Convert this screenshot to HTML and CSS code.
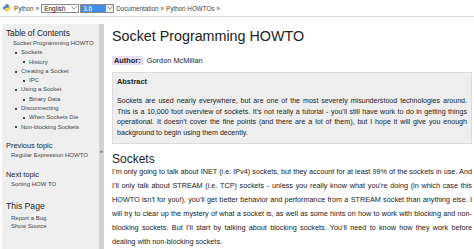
FILE: index.html
```html
<!DOCTYPE html>
<html lang="en">
<head>
    <meta charset="UTF-8">
    <meta name="viewport" content="width=device-width, initial-scale=1.0">
    <title>Socket Programming HOWTO</title>
    <link rel="stylesheet" href="styles.css">
</head>
<body>
    <div class="related">
        <svg class="logo" width="8" height="8" viewBox="0 0 16 16">
            <path d="M7.8 0.5c-3.6 0-3.4 1.6-3.4 1.6v1.6h3.5v0.6H3C1.3 4.3 0.5 5.6 0.5 7.9s1.2 3.6 2.6 3.6h1.4V9.6s-0.1-1.9 1.9-1.9h3.4s1.8 0 1.8-1.8V2.4S11.8 0.5 7.8 0.5z" fill="#3a74a8"/>
            <path d="M8.2 15.5c3.6 0 3.4-1.6 3.4-1.6v-1.6H8.1v-0.6H13c1.7 0 2.5-1.3 2.5-3.6s-1.2-3.6-2.6-3.6h-1.4v1.9s0.1 1.9-1.9 1.9H6.2s-1.8 0-1.8 1.8v3.5s-0.2 1.9 3.8 1.9z" fill="#f5cd3b"/>
        </svg>
        <span>Python</span>
        <span class="sep">&raquo;</span>
        <span class="select lang">
            <span class="value">English</span>
            <span class="arrow"><svg width="6" height="4" viewBox="0 0 6 4"><path d="M0.5 0.5 3 3.2 5.5 0.5" fill="none" stroke="#777" stroke-width="0.8"/></svg></span>
        </span>
        <span class="select version">
            <span class="value">3.6</span>
            <span class="arrow"><svg width="6" height="4" viewBox="0 0 6 4"><path d="M0.5 0.5 3 3.2 5.5 0.5" fill="none" stroke="#777" stroke-width="0.8"/></svg></span>
        </span>
        <span>Documentation</span>
        <span class="sep">&raquo;</span>
        <span>Python HOWTOs</span>
        <span class="sep">&raquo;</span>
    </div>

    <div class="document">
        <div class="sidebar">
            <div class="sidebar-inner">
                <h3>Table of Contents</h3>
                <ul class="toc">
                    <li>Socket Programming HOWTO
                        <ul>
                            <li>Sockets
                                <ul><li>History</li></ul>
                            </li>
                            <li>Creating a Socket
                                <ul><li>IPC</li></ul>
                            </li>
                            <li>Using a Socket
                                <ul><li>Binary Data</li></ul>
                            </li>
                            <li>Disconnecting
                                <ul><li>When Sockets Die</li></ul>
                            </li>
                            <li>Non-blocking Sockets</li>
                        </ul>
                    </li>
                </ul>

                <h4 class="prev">Previous topic</h4>
                <p class="topless">Regular Expression HOWTO</p>

                <h4>Next topic</h4>
                <p class="topless">Sorting HOW TO</p>

                <h3 class="this-page">This Page</h3>
                <ul class="this-page-menu">
                    <li>Report a Bug</li>
                    <li>Show Source</li>
                </ul>
            </div>
            <div class="collapse">&laquo;</div>
        </div>

        <div class="body">
            <h1>Socket Programming HOWTO</h1>

            <div class="field">
                <span class="field-name">Author:</span>
                <span>Gordon McMillan</span>
            </div>

            <div class="topic">
                <p class="topic-title">Abstract</p>
                <p>Sockets are used nearly everywhere, but are one of the most severely misunderstood technologies around. This is a 10,000 foot overview of sockets. It&rsquo;s not really a tutorial - you&rsquo;ll still have work to do in getting things operational. It doesn&rsquo;t cover the fine points (and there are a lot of them), but I hope it will give you enough background to begin using them decently.</p>
            </div>

            <h2>Sockets</h2>
            <p>I&rsquo;m only going to talk about INET (i.e. IPv4) sockets, but they account for at least 99% of the sockets in use. And I&rsquo;ll only talk about STREAM (i.e. TCP) sockets - unless you really know what you&rsquo;re doing (in which case this HOWTO isn&rsquo;t for you!), you&rsquo;ll get better behavior and performance from a STREAM socket than anything else. I will try to clear up the mystery of what a socket is, as well as some hints on how to work with blocking and non-blocking sockets. But I&rsquo;ll start by talking about blocking sockets. You&rsquo;ll need to know how they work before dealing with non-blocking sockets.</p>
            <p>Part of the trouble with understanding these things is that &ldquo;socket&rdquo; can mean a number of subtly different things, depending on context.</p>
        </div>
    </div>
</body>
</html>
```

FILE: styles.css
```css
* {
    margin: 0;
    padding: 0;
    box-sizing: border-box;
}

body {
    font-family: 'Liberation Sans', Arial, sans-serif;
    color: #222;
    background: #fff;
    overflow: hidden;
    height: 249px;
}

/* Top navigation */
.related {
    height: 17px;
    border-bottom: 1px solid #d8d8d8;
    display: flex;
    align-items: center;
    gap: 2px;
    padding-left: 3px;
    font-size: 6.3px;
    color: #444;
}

.logo {
    margin-right: 1px;
}

.select {
    display: flex;
    align-items: stretch;
    height: 9px;
    border: 1px solid #8a8a8a;
    font-size: 6.5px;
    color: #111;
    background: #fff;
}

.select .value {
    display: flex;
    align-items: center;
    padding: 0 2px;
}

.select .arrow {
    display: flex;
    align-items: center;
    justify-content: center;
    width: 8px;
}

.lang {
    width: 38px;
    justify-content: space-between;
}

.version {
    width: 34px;
    margin-left: -1px;
}

.version .value {
    flex: 1;
    background: #3d8ee6;
    color: #fff;
}

.version .arrow {
    border-left: 1px solid #8a8a8a;
    background: #f3f3f3;
}

/* Page */
.document {
    display: flex;
    align-items: flex-start;
    height: 232px;
}

.sidebar {
    display: flex;
    margin: 7px 0 0 2px;
    height: 230px;
}

.sidebar-inner {
    width: 97px;
    background: #efefef;
    padding: 5px 0 0 4px;
    color: #444;
}

.sidebar h3 {
    font-size: 8.2px;
    font-weight: normal;
    line-height: 10px;
    color: #222;
}

.sidebar h4 {
    font-size: 7.4px;
    font-weight: normal;
    line-height: 10px;
    color: #222;
}

.sidebar ul {
    list-style: none;
}

.toc {
    font-size: 6px;
    line-height: 9.3px;
    padding-left: 7px;
}

.toc ul {
    padding-left: 8px;
}

.toc ul li {
    position: relative;
}

.toc ul li::before {
    content: "";
    position: absolute;
    left: -6px;
    top: 3.8px;
    width: 2px;
    height: 2px;
    background: #444;
}

.sidebar h4.prev {
    margin-top: 9px;
}

.topless {
    font-size: 6px;
    line-height: 9px;
    padding-left: 5px;
}

.sidebar h4 + .topless + h4 {
    margin-top: 10px;
}

.sidebar h3.this-page {
    font-size: 8.6px;
    line-height: 11px;
    margin-top: 12px;
}

.this-page-menu {
    font-size: 6px;
    line-height: 8px;
    margin-top: 2px;
    padding-left: 5px;
}

.collapse {
    width: 5px;
    background: #d2d2d2;
    color: #555;
    font-size: 6px;
    text-align: center;
    padding-top: 124px;
}

/* Main content */
.body {
    flex: 1;
    padding: 11px 2px 0 8px;
}

h1 {
    font-size: 14.3px;
    font-weight: normal;
    line-height: 17px;
    color: #222;
}

.field {
    margin-top: 11px;
    font-size: 7.4px;
    line-height: 10px;
}

.field-name {
    font-weight: bold;
    background: #e9dcf0;
    padding: 0 2px;
    margin-right: 2px;
}

.topic {
    margin-top: 6px;
    background: #eeeeee;
    border: 1px solid #dcdcdc;
    padding: 4px 4px 4px 4px;
    font-size: 7.1px;
    line-height: 10.7px;
}

.topic-title {
    font-weight: bold;
    font-size: 7.4px;
    line-height: 10px;
    margin-bottom: 9px;
}

.topic p {
    text-align: justify;
}

h2 {
    font-size: 12px;
    font-weight: normal;
    line-height: 13px;
    margin-top: 9px;
}

.body > p {
    font-size: 7.25px;
    line-height: 14px;
    text-align: justify;
    margin-top: -1px;
    margin-bottom: 0;
}
```
